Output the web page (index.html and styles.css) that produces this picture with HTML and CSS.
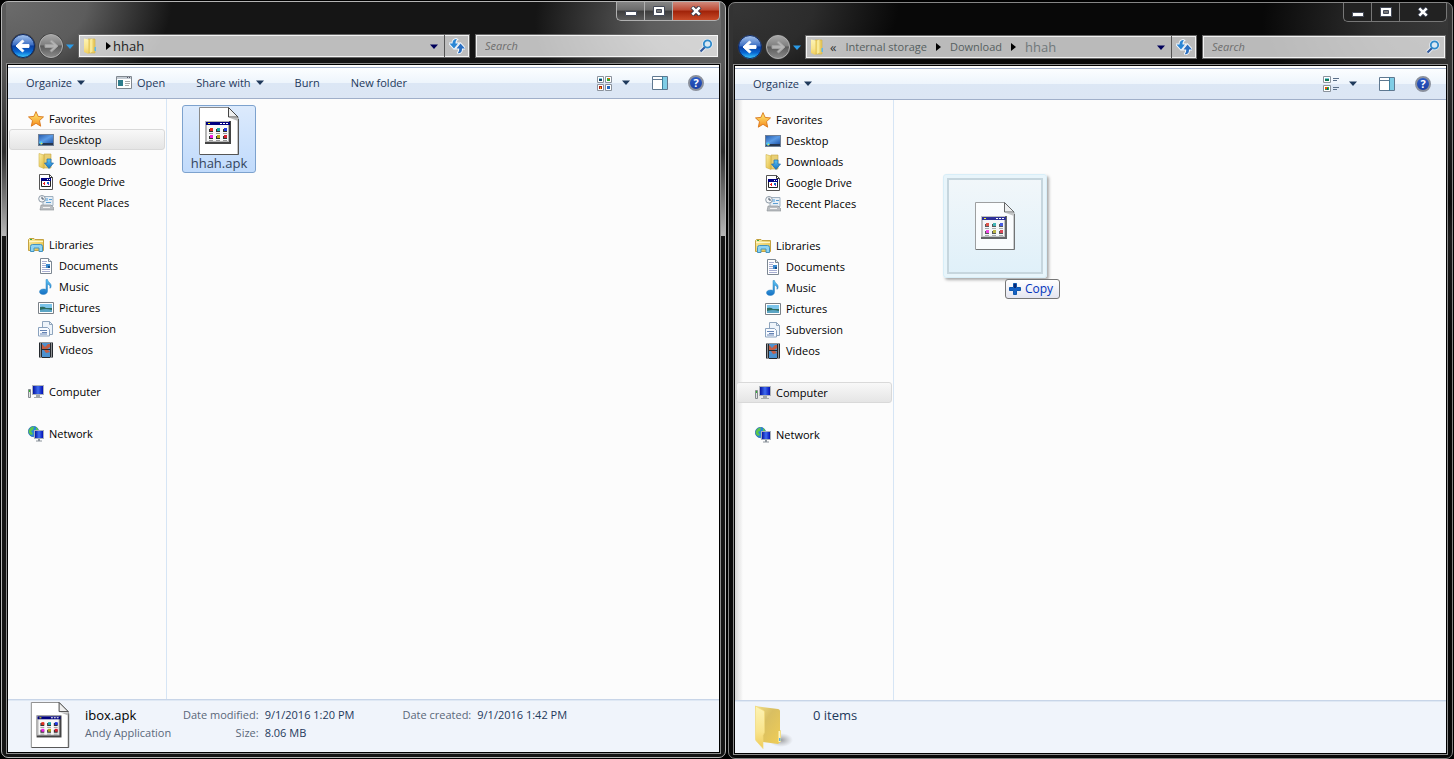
FILE: index.html
```html
<!DOCTYPE html>
<html lang="en">
<head>
    <meta charset="UTF-8">
    <meta name="viewport" content="width=device-width, initial-scale=1.0">
    <title>hhah</title>
    <link rel="stylesheet" href="styles.css">
</head>
<body>

<!-- Shared icons -->
<svg class="sprite" aria-hidden="true">
    <defs>
        <linearGradient id="gold" x1="0" y1="0" x2="1" y2="1"><stop offset="0" stop-color="#fbf0a8"/><stop offset="1" stop-color="#e2b93c"/></linearGradient>
        <linearGradient id="goldLight" x1="0" y1="0" x2="0" y2="1"><stop offset="0" stop-color="#fdf3b4"/><stop offset="0.6" stop-color="#f9e48c"/><stop offset="1" stop-color="#efcb58"/></linearGradient>
        <linearGradient id="goldDark" x1="0" y1="0" x2="1" y2="1"><stop offset="0" stop-color="#f3e08a"/><stop offset="0.4" stop-color="#d9bf62"/><stop offset="1" stop-color="#f0cd55"/></linearGradient>
        <linearGradient id="blue" x1="0" y1="0" x2="0" y2="1"><stop offset="0" stop-color="#5cc3f3"/><stop offset="1" stop-color="#1571c4"/></linearGradient>
        <linearGradient id="screen" x1="0" y1="0" x2="1" y2="1"><stop offset="0" stop-color="#2a5fae"/><stop offset="0.5" stop-color="#5b9be6"/><stop offset="1" stop-color="#2359ad"/></linearGradient>
        <linearGradient id="monitor" x1="0" y1="0" x2="1" y2="0"><stop offset="0" stop-color="#0613a0"/><stop offset="0.5" stop-color="#3f6cf0"/><stop offset="1" stop-color="#0310b4"/></linearGradient>
        <linearGradient id="star" x1="0" y1="0" x2="0" y2="1"><stop offset="0" stop-color="#fff27a"/><stop offset="1" stop-color="#f58a1c"/></linearGradient>
        <linearGradient id="ballBlue" x1="0" y1="0" x2="0" y2="1"><stop offset="0" stop-color="#a9c6ee"/><stop offset="0.45" stop-color="#3c6fc4"/><stop offset="0.5" stop-color="#0a3fa0"/><stop offset="0.75" stop-color="#0868d4"/><stop offset="1" stop-color="#3fd0ff"/></linearGradient>
        <linearGradient id="ballGray" x1="0" y1="0" x2="0" y2="1"><stop offset="0" stop-color="#a8a8a8"/><stop offset="0.45" stop-color="#808080"/><stop offset="0.5" stop-color="#5a5a5a"/><stop offset="1" stop-color="#8c8c8c"/></linearGradient>
        <radialGradient id="shade"><stop offset="0" stop-color="#777" stop-opacity="0.7"/><stop offset="1" stop-color="#999" stop-opacity="0"/></radialGradient>
    </defs>
    <symbol id="i-star" viewBox="0 0 16 16"><path d="M8 0.600l2.100 4.800 5.400.5-4 3.700 1.200 5.600L8 12.300l-4.700 2.900 1.200-5.600-4-3.700 5.400-.5z" fill="url(#star)" stroke="#d9761a" stroke-width="0.9" stroke-linejoin="round"/></symbol>
    <symbol id="i-desktop" viewBox="0 0 16 16"><path d="M0 2h16v12H0z" fill="#6f7f96"/><path d="M1 3h14v8H1z" fill="url(#screen)"/><path d="M1 11h14v2H1z" fill="#26364f"/><circle cx="3" cy="11" r="1.800" fill="#4cc8ef"/><circle cx="3.500" cy="11.500" r="0.8" fill="#f5d84a"/></symbol>
    <symbol id="i-downloads" viewBox="0 0 16 16"><path d="M6 1h7v14H6z" fill="#e8cf75" stroke="#c6a641" stroke-width="0.6"/><path d="M1 0.500l5 1.500v13.500L1 13.500z" fill="url(#gold)" stroke="#cfae45" stroke-width="0.6"/><path d="M9 6h4v4h2.500L11 15.500 6.500 10H9z" fill="url(#blue)" stroke="#1a68ad" stroke-width="0.7"/></symbol>
    <symbol id="i-exe" viewBox="0 0 16 16"><path d="M1.500 0.500h10l3 3v12h-13z" fill="#fff" stroke="#555"/><path d="M11.500 0.500v3h3" fill="none" stroke="#333"/><path d="M3.500 4.500h9v8h-9z" fill="#fff" stroke="#222"/><path d="M3 4h10v3H3z" fill="#000080"/><path d="M9 5h1v1H9zM11 5h1v1h-1z" fill="#fff"/><path d="M6 8h1v3H6zM5 9h1v1H5z" fill="#e22"/><path d="M9 8h2v2H9z" fill="#16c"/><path d="M10 10h1v1h-1z" fill="#c0c"/></symbol>
    <symbol id="i-recent" viewBox="0 0 16 16"><path d="M5 1.500h10v9H5z" fill="#e6eef5" stroke="#9fb0bf"/><path d="M7 3h3v3H7z" fill="#9ac7ea"/><path d="M11 4h3v1h-3zM8 7h5v1H8z" fill="#5a9fd4"/><path d="M3 10h10l3 3v2H2z" fill="#b9bdc1" stroke="#8b9095" stroke-width="0.6"/><path d="M5 12h7v1H5z" fill="#f4f4f4"/><circle cx="4" cy="3.800" r="3.300" fill="#f5f7f9" stroke="#8e9aa6"/><path d="M4 1.800v2.200h2" fill="none" stroke="#456"/></symbol>
    <symbol id="i-libraries" viewBox="0 0 16 16"><path d="M0.500 2.500l1-1H6l1 1h8.500v11H0.500z" fill="url(#gold)" stroke="#c4a241"/><path d="M1 4.500h14" stroke="#fff6c8"/><path d="M2 2h2v1H2z" fill="#3aa845"/><path d="M2.500 14.500v-5q0-2 2-2h8q2 0 2 2v5h-3.500v-3.500h-5v3.500z" fill="#8fd3f2" stroke="#4393c0"/></symbol>
    <symbol id="i-documents" viewBox="0 0 16 16"><path d="M2.500 0.500h8l3 3v12h-11z" fill="#fff" stroke="#7c8792"/><path d="M10.500 0.500v3h3" fill="#e4eaf0" stroke="#7c8792"/><path d="M4 3.500h5M4 5.500h4M4 7.500h4M4 9.500h4M4 11.500h8M4 13.500h8" stroke="#a8aed2"/><path d="M8 6h4v4H8z" fill="#3c8ad0"/><path d="M10 8h2v2h-2z" fill="#154f8c"/></symbol>
    <symbol id="i-music" viewBox="0 0 16 16"><path d="M8 0.500h1.500c.4 3 4.500 3.500 3.500 7.500-.3 1-1 1.500-1.200 1.200C12.600 7 11.500 5.800 9.500 5.200V12c0 2-1.700 3.500-4.200 3.500S1.500 14.200 1.500 12.800 3 10 5.500 10c1 0 1.800.1 2.500.5z" fill="url(#blue)" stroke="#2a80c0" stroke-width="0.5"/></symbol>
    <symbol id="i-pictures" viewBox="0 0 16 16"><path d="M0.500 2.500h15v11H0.500z" fill="#fff" stroke="#7a8087"/><path d="M2 4h12v8H2z" fill="#7cc4ea"/><path d="M2 7q4-1 6 1h6v4H2z" fill="#2c6c60"/><path d="M2 10q6-2 12 0v2H2z" fill="#5ba5c4"/></symbol>
    <symbol id="i-subversion" viewBox="0 0 16 16"><path d="M4.500 0.500h7l3 3v10h-10z" fill="#eef4fa" stroke="#8fa5bd"/><path d="M11.500 0.500v3h3" fill="none" stroke="#8fa5bd"/><path d="M0.500 6.500h9l2 2v6.500H0.500z" fill="#f8fbff" stroke="#8aa2be"/><path d="M2 9.500h7M4 11.500h5M2 13h7" stroke="#6684b4"/></symbol>
    <symbol id="i-videos" viewBox="0 0 16 16"><path d="M1 0.500h14v15H1z" fill="#25292e"/><path d="M4 1h8v14H4z" fill="#4c91cf"/><path d="M4 2l3 3 3-3h2v3l-3 2H4zM6 8h4l2 2-4 1z" fill="#c45d43"/><path d="M4 7h8v1H4zM4 15h8v1H4z" fill="#25292e"/><path d="M2.500 1.500v14M13.500 1.500v14" stroke="#fff" stroke-dasharray="1 1"/></symbol>
    <symbol id="i-computer" viewBox="0 0 16 16"><path d="M4 1h12v10H4z" fill="#aeb3b9"/><path d="M5 2h10v8H5z" fill="url(#monitor)"/><path d="M8 11h4v2h2v1H6v-1h2z" fill="#a3a7ab"/><path d="M0.500 5.500h2v8h-2z" fill="#dfe2e4" stroke="#858a8e"/><path d="M1 6h1v2H1z" fill="#35b535"/></symbol>
    <symbol id="i-network" viewBox="0 0 16 16"><circle cx="5.500" cy="5.500" r="5.200" fill="#2888d8" stroke="#1c5fa0" stroke-width="0.6"/><path d="M1 4q2-4 5-3.200L5 4 3 5l2 3-2 1Q0 7 1 4zM8 1q2 1 2 3L8 4z" fill="#5cc84a"/><path d="M6 4h10v9H6z" fill="#a8b0ba"/><path d="M7 5h8v7H7z" fill="url(#monitor)"/><path d="M10 13h2v1.500h2v1H8v-1h2z" fill="#8c939b"/></symbol>
    <symbol id="i-folder" viewBox="0 0 16 18"><path d="M6 2h7v14H6z" fill="#e9cc62" stroke="#d0ae42" stroke-width="0.6"/><path d="M2 1.500l4.500 1V17L2 15z" fill="url(#goldLight)"/><path d="M8 2.500l2.500-1v13l-2.500 1.500z" fill="#f9ea98"/><path d="M12.500 10h1.500v4h-1.500z" fill="#5cb8ee"/></symbol>
    <symbol id="i-folder-lg" viewBox="3 0 40 48"><ellipse cx="29" cy="37" rx="12" ry="7" fill="url(#shade)"/><path d="M3 3l23 3c1 0 2 1 2 2v19l1 1v10l-3 3-15-2z" fill="url(#goldDark)"/><path d="M3.500 3l8 4.500c.6.400 1 1 1 2v20l-1.500 3v13L4.300 38c-.6-.7-.8-1.200-.8-2z" fill="url(#goldLight)" stroke="#f0d878" stroke-width="0.7"/><path d="M26.500 28h2v11h-2z" fill="#fff4bc"/><path d="M27 35h1.500v3H27z" fill="#5ab2e8"/></symbol>
    <symbol id="i-apk" viewBox="0 0 40 48">
        <path d="M0.500 0.500h29l9.500 9.500v37.500H0.500z" fill="#fff" stroke="#8a8a8a"/>
        <path d="M1 47.500h38.500V12" fill="none" stroke="#555"/>
        <path d="M29.500 0.500v9.500H39z" fill="#eee" stroke="#444"/><path d="M31 11h8v3z" fill="#bbb"/>
        <path d="M6 14h26v23H6z" fill="#444"/><path d="M6 14h24v21H6z" fill="#b5b5b5"/><path d="M8 18h21v16H8z" fill="#f8f8f8"/>
        <path d="M7 15h24v3H7z" fill="#000080"/><path d="M9 16h2v1H9z" fill="#ff0"/><path d="M21 16h2v1h-2zM24 16h2v1h-2zM27 16h2v1h-2z" fill="#fff"/>
        <path d="M10 22h4v3h-4zM17 22h4v3h-4zM24 22h4v3h-4zM10 29h4v3h-4zM17 29h4v3h-4zM24 29h4v3h-4z" fill="#333"/>
        <path d="M11 21h3v3h-3z" fill="#e03020"/><path d="M18 21h3v3h-3z" fill="#18a8a8"/><path d="M25 21h3v3h-3z" fill="#2038e0"/>
        <path d="M11 28h3v3h-3z" fill="#f020e0"/><path d="M18 28h3v3h-3z" fill="#b0a818"/><path d="M25 28h3v3h-3z" fill="#d82030"/>
        <path d="M10 26.500h4M17 26.500h4M24 26.500h4M10 33.500h4M17 33.500h4M24 33.500h4" stroke="#999"/>
    </symbol>
    <symbol id="i-back" viewBox="0 0 26 26"><circle cx="13" cy="13" r="12.500" fill="#3a3a3a"/><circle cx="13" cy="13" r="11.500" fill="url(#ballBlue)" stroke="#0d2864"/><path d="M6 13l6.500-6 1.400 1.500-3.200 3.100H19v2.800h-8.300l3.200 3.100-1.400 1.500z" fill="#fff" stroke="#fff" stroke-linejoin="round"/></symbol>
    <symbol id="i-forward" viewBox="0 0 26 26"><circle cx="13" cy="13" r="12.500" fill="#3a3a3a"/><circle cx="13" cy="13" r="11.500" fill="url(#ballGray)" stroke="#b0b0b0"/><path d="M20 13l-6.500-6-1.400 1.500 3.200 3.100H7v2.800h8.300l-3.200 3.100 1.400 1.500z" fill="#b4b4b4" stroke="#a0a0a0" stroke-linejoin="round"/></symbol>
    <symbol id="i-refresh" viewBox="0 0 16 16"><path d="M7 1C4.500 1.500 3.500 3 3.500 5.500H0.500L5 10.500l4-5H6.500c0-2 .3-3 1.500-4z" fill="#2b86d4" stroke="#f2f7fc" stroke-width="2" paint-order="stroke"/><path d="M9.500 15.500c3-.8 3.500-2.500 3.500-5h3L11.500 5.500 7.500 10.500h2.700c0 2-.2 3-1.200 4z" fill="#2b6fc0" stroke="#f2f7fc" stroke-width="2" paint-order="stroke"/></symbol>
    <symbol id="i-search" viewBox="0 0 14 14"><circle cx="8.500" cy="5" r="3.700" fill="#d8e8f4" stroke="#e8eef4" stroke-width="3.200"/><path d="M6 8L1.500 12.500" stroke="#e8eef4" stroke-width="4"/><path d="M6 8L1.500 12.500" stroke="#31589c" stroke-width="2.200"/><circle cx="8.500" cy="5" r="3.700" fill="#d8e8f4" stroke="#2f8acb" stroke-width="1.800"/></symbol>
    <symbol id="i-down" viewBox="0 0 8 5"><path d="M0 0.500h8L4 5z" fill="currentColor"/></symbol>
    <symbol id="i-right" viewBox="0 0 5 8"><path d="M0 0l5 4-5 4z" fill="currentColor"/></symbol>
    <symbol id="i-open" viewBox="0 0 16 14"><path d="M0.500 0.500h15v12H0.500z" fill="#fff" stroke="#808890"/><path d="M1 1h14v2H1z" fill="#c4ccd4"/><path d="M11 1h1v1h-1zM13 1h1v1h-1z" fill="#556"/><path d="M2 4h5v6H2z" fill="#2f7d8c"/><path d="M9 5.500h5M9 7.500h5M9 9.500h4" stroke="#aaa"/></symbol>
    <symbol id="i-views" viewBox="0 0 16 16"><path d="M1.500 1.500h6v6h-6zM9.500 1.500h6v6h-6zM1.500 9.500h6v6h-6zM9.500 9.500h6v6h-6z" fill="#fff" stroke="#8a929c"/><path d="M3 3h3v1H3z" fill="#7cd"/><path d="M3 4h3v2H3z" fill="#146"/><path d="M11 3h3v3h-3z" fill="#3a3"/><path d="M12 3h2v1h-2z" fill="#e60"/><path d="M3 11h3v3H3z" fill="#a21"/><path d="M4 12h1v2H4z" fill="#fa0"/><path d="M11 11h3v3h-3z" fill="#26b"/></symbol>
    <symbol id="i-tiles" viewBox="0 0 16 16"><path d="M0.500 0.500h7v6h-7zM0.500 9.500h7v6h-7z" fill="#fff" stroke="#8a929c"/><path d="M2 2h4v1H2z" fill="#7cd"/><path d="M2 3h4v2H2z" fill="#175"/><path d="M2 11h4v3H2z" fill="#3a3"/><path d="M2 11h2v2H2z" fill="#e50"/><path d="M4 12h1v2H4z" fill="#13a"/><path d="M10 2.500h6M10 4.500h4M10 11.500h6M10 13.500h4" stroke="#5a6f88"/></symbol>
    <symbol id="i-preview" viewBox="0 0 16 14"><path d="M0.500 0.500h15v13H0.500z" fill="#fff" stroke="#5f7890"/><path d="M1 3.500h9" stroke="#5f7890"/><path d="M10 1h5v12h-5z" fill="#7fcde6"/><path d="M10.500 0v14" stroke="#3f7f9c"/></symbol>
    <symbol id="i-close" viewBox="0 0 12 10"><path d="M2 1l8 8M10 1L2 9" stroke="#333a4a" stroke-width="4.400"/><path d="M2.300 1.300l7.400 7.400M9.700 1.300L2.300 8.700" stroke="#fff" stroke-width="2.600"/></symbol>
    <symbol id="i-min" viewBox="0 0 12 10"><path d="M0.500 5.500h11v4H0.500z" fill="#fff" stroke="#444a58"/></symbol>
    <symbol id="i-max" viewBox="0 0 12 10"><path d="M0.500 0.500h11v9H0.500z" fill="#fff" stroke="#444a58"/><path d="M3.500 3.500h5v3h-5z" fill="#777" stroke="#444a58"/></symbol>
    <symbol id="i-plus" viewBox="0 0 12 12"><path d="M4.500 0.500h3v4h4v3h-4v4h-3v-4h-4v-3h4z" fill="#1560c4" stroke="#0f56ac"/><path d="M5 1h2v4H5z" fill="#0a2878"/></symbol>
</svg>

<main class="desktop">

    <section class="window" aria-label="hhah on this computer">
        <header class="glass">
            <div class="caption">
                <button class="caption-btn" aria-label="Minimize"><svg class="glyph"><use href="#i-min"/></svg></button>
                <button class="caption-btn" aria-label="Maximize"><svg class="glyph"><use href="#i-max"/></svg></button>
                <button class="caption-btn close" aria-label="Close"><svg class="glyph"><use href="#i-close"/></svg></button>
            </div>
            <div class="navbar">
                <div class="travel">
                    <button aria-label="Back"><svg class="ball"><use href="#i-back"/></svg></button>
                    <button aria-label="Forward"><svg class="ball"><use href="#i-forward"/></svg></button>
                    <button class="recent" aria-label="Recent pages"><svg class="down"><use href="#i-down"/></svg></button>
                </div>
                <div class="address">
                    <svg class="folder"><use href="#i-folder"/></svg>
                    <nav class="crumbs" aria-label="Path">
                        <svg class="right"><use href="#i-right"/></svg>
                        <a class="current" href="#">hhah</a>
                    </nav>
                    <button class="history" aria-label="Previous locations"><svg class="down"><use href="#i-down"/></svg></button>
                    <button class="refresh" aria-label="Refresh"><svg class="icon"><use href="#i-refresh"/></svg></button>
                </div>
                <div class="search">
                    <input type="text" placeholder="Search" aria-label="Search hhah">
                    <svg class="lens"><use href="#i-search"/></svg>
                </div>
            </div>
        </header>

        <div class="client">
            <div class="toolbar">
                <button>Organize <svg class="down"><use href="#i-down"/></svg></button>
                <button><svg class="wide"><use href="#i-open"/></svg>Open</button>
                <button>Share with <svg class="down"><use href="#i-down"/></svg></button>
                <button>Burn</button>
                <button>New folder</button>
                <div class="tools">
                    <button aria-label="Change view"><svg class="icon"><use href="#i-views"/></svg></button>
                    <button class="view-menu" aria-label="More views"><svg class="down"><use href="#i-down"/></svg></button>
                    <button aria-label="Preview pane"><svg class="wide"><use href="#i-preview"/></svg></button>
                    <button class="help" aria-label="Help">?</button>
                </div>
            </div>
            <div class="panes">
                <nav class="tree" aria-label="Folders">
                    <ul>
                        <li><a href="#"><svg class="icon"><use href="#i-star"/></svg>Favorites</a></li>
                        <li><a class="sub selected" href="#"><svg class="icon"><use href="#i-desktop"/></svg>Desktop</a></li>
                        <li><a class="sub" href="#"><svg class="icon"><use href="#i-downloads"/></svg>Downloads</a></li>
                        <li><a class="sub" href="#"><svg class="icon"><use href="#i-exe"/></svg>Google Drive</a></li>
                        <li><a class="sub" href="#"><svg class="icon"><use href="#i-recent"/></svg>Recent Places</a></li>
                    </ul>
                    <ul>
                        <li><a href="#"><svg class="icon"><use href="#i-libraries"/></svg>Libraries</a></li>
                        <li><a class="sub" href="#"><svg class="icon"><use href="#i-documents"/></svg>Documents</a></li>
                        <li><a class="sub" href="#"><svg class="icon"><use href="#i-music"/></svg>Music</a></li>
                        <li><a class="sub" href="#"><svg class="icon"><use href="#i-pictures"/></svg>Pictures</a></li>
                        <li><a class="sub" href="#"><svg class="icon"><use href="#i-subversion"/></svg>Subversion</a></li>
                        <li><a class="sub" href="#"><svg class="icon"><use href="#i-videos"/></svg>Videos</a></li>
                    </ul>
                    <ul>
                        <li><a href="#"><svg class="icon"><use href="#i-computer"/></svg>Computer</a></li>
                    </ul>
                    <ul>
                        <li><a href="#"><svg class="icon"><use href="#i-network"/></svg>Network</a></li>
                    </ul>
                </nav>
                <div class="files">
                    <button class="file"><svg class="apk"><use href="#i-apk"/></svg>hhah.apk</button>
                </div>
            </div>
            <footer class="details">
                <svg class="apk"><use href="#i-apk"/></svg>
                <div class="summary">
                    <div class="name">ibox.apk</div>
                    <div class="type">Andy Application</div>
                </div>
                <dl class="props">
                    <dt>Date modified:</dt><dd>9/1/2016 1:20 PM</dd>
                    <dt>Size:</dt><dd>8.06 MB</dd>
                </dl>
                <dl class="props">
                    <dt>Date created:</dt><dd>9/1/2016 1:42 PM</dd>
                </dl>
            </footer>
        </div>
    </section>

    <section class="window inactive" aria-label="hhah on internal storage">
        <header class="glass">
            <div class="caption">
                <button class="caption-btn" aria-label="Minimize"><svg class="glyph"><use href="#i-min"/></svg></button>
                <button class="caption-btn" aria-label="Maximize"><svg class="glyph"><use href="#i-max"/></svg></button>
                <button class="caption-btn close" aria-label="Close"><svg class="glyph"><use href="#i-close"/></svg></button>
            </div>
            <div class="navbar">
                <div class="travel">
                    <button aria-label="Back"><svg class="ball"><use href="#i-back"/></svg></button>
                    <button aria-label="Forward"><svg class="ball"><use href="#i-forward"/></svg></button>
                    <button class="recent" aria-label="Recent pages"><svg class="down"><use href="#i-down"/></svg></button>
                </div>
                <div class="address">
                    <svg class="folder"><use href="#i-folder"/></svg>
                    <nav class="crumbs path" aria-label="Path">
                        <span class="more">«</span>
                        <a href="#">Internal storage</a>
                        <svg class="right"><use href="#i-right"/></svg>
                        <a href="#">Download</a>
                        <svg class="right"><use href="#i-right"/></svg>
                        <a class="current" href="#">hhah</a>
                    </nav>
                    <button class="history" aria-label="Previous locations"><svg class="down"><use href="#i-down"/></svg></button>
                    <button class="refresh" aria-label="Refresh"><svg class="icon"><use href="#i-refresh"/></svg></button>
                </div>
                <div class="search">
                    <input type="text" placeholder="Search" aria-label="Search hhah">
                    <svg class="lens"><use href="#i-search"/></svg>
                </div>
            </div>
        </header>

        <div class="client">
            <div class="toolbar">
                <button>Organize <svg class="down"><use href="#i-down"/></svg></button>
                <div class="tools">
                    <button aria-label="Change view"><svg class="icon"><use href="#i-tiles"/></svg></button>
                    <button class="view-menu" aria-label="More views"><svg class="down"><use href="#i-down"/></svg></button>
                    <button aria-label="Preview pane"><svg class="wide"><use href="#i-preview"/></svg></button>
                    <button class="help" aria-label="Help">?</button>
                </div>
            </div>
            <div class="panes">
                <nav class="tree" aria-label="Folders">
                    <ul>
                        <li><a href="#"><svg class="icon"><use href="#i-star"/></svg>Favorites</a></li>
                        <li><a class="sub" href="#"><svg class="icon"><use href="#i-desktop"/></svg>Desktop</a></li>
                        <li><a class="sub" href="#"><svg class="icon"><use href="#i-downloads"/></svg>Downloads</a></li>
                        <li><a class="sub" href="#"><svg class="icon"><use href="#i-exe"/></svg>Google Drive</a></li>
                        <li><a class="sub" href="#"><svg class="icon"><use href="#i-recent"/></svg>Recent Places</a></li>
                    </ul>
                    <ul>
                        <li><a href="#"><svg class="icon"><use href="#i-libraries"/></svg>Libraries</a></li>
                        <li><a class="sub" href="#"><svg class="icon"><use href="#i-documents"/></svg>Documents</a></li>
                        <li><a class="sub" href="#"><svg class="icon"><use href="#i-music"/></svg>Music</a></li>
                        <li><a class="sub" href="#"><svg class="icon"><use href="#i-pictures"/></svg>Pictures</a></li>
                        <li><a class="sub" href="#"><svg class="icon"><use href="#i-subversion"/></svg>Subversion</a></li>
                        <li><a class="sub" href="#"><svg class="icon"><use href="#i-videos"/></svg>Videos</a></li>
                    </ul>
                    <ul>
                        <li><a class="selected" href="#"><svg class="icon"><use href="#i-computer"/></svg>Computer</a></li>
                    </ul>
                    <ul>
                        <li><a href="#"><svg class="icon"><use href="#i-network"/></svg>Network</a></li>
                    </ul>
                </nav>
                <div class="files">
                    <div class="drag">
                        <svg class="apk"><use href="#i-apk"/></svg>
                        <div class="drop-tip"><svg class="plus"><use href="#i-plus"/></svg>Copy</div>
                    </div>
                </div>
            </div>
            <footer class="details">
                <svg class="folder-lg"><use href="#i-folder-lg"/></svg>
                <div class="count">0 items</div>
            </footer>
        </div>
    </section>

</main>

</body>
</html>
```
FILE: styles.css
```css
* {
    box-sizing: border-box;
}

body {
    margin: 0;
    background: #000;
    color: #000;
    font-family: "Open Sans", "Noto Sans", sans-serif;
    font-size: 11px;
    line-height: 18px;
}

button {
    display: flex;
    align-items: center;
    padding: 0;
    border: none;
    background: none;
    color: inherit;
    font: inherit;
}

a {
    color: inherit;
    text-decoration: none;
}

svg {
    display: block;
    flex: none;
}

.sprite {
    position: absolute;
    width: 0;
    height: 0;
}

.icon { width: 16px; height: 16px; }
.wide { width: 16px; height: 14px; }
.down { width: 8px; height: 5px; }
.right { width: 5px; height: 8px; }
.glyph { width: 12px; height: 10px; }
.ball { width: 26px; height: 26px; }
.folder { width: 16px; height: 18px; }
.lens { width: 14px; height: 14px; }
.plus { width: 12px; height: 12px; }
.apk, .folder-lg { width: 40px; height: 48px; }

/* Windows */
.desktop {
    display: flex;
    gap: 2px;
    min-height: 100vh;
    padding: 1px 1px 0;
}

.window {
    flex: 1;
    min-width: 0;
    display: flex;
    flex-direction: column;
    margin-bottom: 1px;
    padding: 0 4px 3px;
    border: 1px solid #b4b4b4;
    border-radius: 7px;
    background:
        linear-gradient(#5a5a5a 60px, #2c2c2c 150px, #b8b8b8 234px) left top / 4px 234px no-repeat,
        linear-gradient(#5a5a5a 60px, #2c2c2c 150px, #b8b8b8 234px) right top / 4px 234px no-repeat,
        radial-gradient(170px 110px at 0 0, #6c6c6c, #5c5c5c 50%, rgba(21, 21, 21, 0)) no-repeat,
        radial-gradient(190px 110px at 100% 20px, #6c6c6c, #5c5c5c 40%, rgba(21, 21, 21, 0)) no-repeat,
        #151515;
}

.window.inactive {
    margin: 1px 0 0;
    border-color: #858585;
    background:
        linear-gradient(#333 60px, #0a0a0a 200px, #1c1c1c 234px, #080808 340px) left top / 4px 340px no-repeat,
        linear-gradient(#333 60px, #0a0a0a 200px, #1c1c1c 234px, #080808 340px) right top / 4px 340px no-repeat,
        radial-gradient(170px 110px at 0 0, #363636, #2c2c2c 50%, rgba(8, 8, 8, 0)) no-repeat,
        radial-gradient(190px 110px at 100% 20px, #383838, #2e2e2e 40%, rgba(8, 8, 8, 0)) no-repeat,
        #080808;
}

.glass {
    height: 61px;
}

.caption {
    display: flex;
    justify-content: flex-end;
    height: 19px;
    padding-right: 1px;
}

.caption-btn {
    justify-content: center;
    width: 28px;
    border: 1px solid #b0b0b0;
    border-top: none;
    border-right: none;
    background: linear-gradient(#858585, #6a6a6a 45%, #3c3c3c 50%, #5c5c5c);
}

.caption-btn:first-child {
    border-bottom-left-radius: 5px;
}

.caption-btn.close {
    width: 48px;
    border-right: 1px solid #b0b0b0;
    border-bottom-right-radius: 5px;
    background: linear-gradient(#d08a7c, #bd4a34 45%, #a02208 50%, #c84a28);
}

.inactive .caption-btn,
.inactive .caption-btn.close {
    border-color: #777;
    background: #222;
}

.navbar {
    display: flex;
    align-items: center;
    height: 26px;
    margin-top: 12px;
    padding: 0 2px 0 4px;
}

.travel {
    display: flex;
    align-items: center;
    gap: 2px;
    width: 68px;
}

.recent {
    color: #2a9be8;
}

.address,
.search {
    display: flex;
    align-items: center;
    height: 24px;
    border: 1px solid #666;
    background: rgba(255, 255, 255, 0.72);
    box-shadow: inset 0 0 0 1px rgba(255, 255, 255, 0.8);
}

.address {
    flex: 1;
    min-width: 0;
    padding-left: 3px;
}

.crumbs {
    flex: 1;
    display: flex;
    align-items: center;
    gap: 2px;
    padding-left: 8px;
    color: #222;
    white-space: nowrap;
}

.crumbs.path {
    gap: 9px;
    padding-left: 5px;
    color: #566060;
}

.crumbs .right {
    color: #000;
}

.crumbs .current {
    font-size: 13px;
}

.path .current {
    color: #70787a;
}

.more {
    font-size: 13px;
    color: #333;
}

.history {
    width: 14px;
    height: 22px;
    color: #00005a;
}

.refresh {
    justify-content: center;
    width: 25px;
    height: 22px;
    border-left: 1px solid #555;
}

.search {
    width: 244px;
    margin-left: 5px;
    padding: 0 5px 0 9px;
}

.search input {
    flex: 1;
    min-width: 0;
    padding: 0;
    border: none;
    outline: none;
    background: none;
    font: inherit;
    font-style: italic;
}

.search input::placeholder {
    color: #6e6e6e;
}

.client {
    flex: 1;
    display: flex;
    flex-direction: column;
    border: 1px solid #8c8c8c;
    outline: 1px solid #000;
    outline-offset: -2px;
    padding: 1px;
    background: #fcfcfc;
}

/* Command bar */
.toolbar {
    display: flex;
    align-items: center;
    gap: 31px;
    height: 34px;
    padding: 0 15px 0 18px;
    border-top: 2px solid #fff;
    border-bottom: 1px solid #a0afc9;
    background: linear-gradient(#a3b2cc 1px, #fcfeff 1px, #eef5fc 50%, #dce7f5 51%, #dce6f4);
    color: #1e395b;
}

.toolbar button {
    gap: 5px;
}

.tools {
    display: flex;
    align-items: center;
    gap: 20px;
    margin-left: auto;
}

.tools .view-menu {
    margin: 0 2px 0 -10px;
}

.toolbar .help {
    justify-content: center;
    width: 16px;
    height: 16px;
    border: 2px solid #8a909c;
    border-radius: 50%;
    background: linear-gradient(#2c5cc8, #1a3fa4);
    color: #fff;
    font-weight: bold;
    line-height: 12px;
}

/* Panes */
.panes {
    flex: 1;
    display: flex;
}

.tree {
    width: 159px;
    padding: 9px 1px 0;
    border-right: 1px solid #d6e5f5;
}

.inactive .tree {
    background: linear-gradient(90deg, #d4d4d4, #fcfcfc 8px);
}

.tree ul {
    margin: 0 0 21px;
    padding: 0;
    list-style: none;
}

.tree a {
    display: flex;
    align-items: center;
    gap: 5px;
    height: 21px;
    padding-left: 18px;
    border: 1px solid transparent;
    border-radius: 3px;
}

.tree .sub {
    padding-left: 28px;
}

.tree .selected {
    border-color: #d9d9d9;
    background: linear-gradient(#f8f8f8, #e5e5e5);
}

.files {
    position: relative;
    flex: 1;
    padding: 6px 15px;
}

.file {
    flex-direction: column;
    width: 74px;
    height: 68px;
    padding-top: 1px;
    border: 1px solid #7da2ce;
    border-radius: 3px;
    background: linear-gradient(#dceafc, #c1dbfc);
    color: #33445c;
    font-size: 13px;
    line-height: 16px;
}

/* Item being dragged */
.drag {
    position: absolute;
    top: 74px;
    left: 49px;
    display: flex;
    align-items: center;
    justify-content: center;
    width: 104px;
    height: 104px;
    border: 1px solid #d8eef8;
    border-radius: 3px;
    outline: 2px solid #c6d6de;
    outline-offset: -6px;
    background: linear-gradient(#f2f7fa, #dff0f9);
    box-shadow: inset 0 0 0 3px #e8f5fb, 2px 2px 3px #aaa;
}

.drag .apk {
    opacity: 0.8;
}

.drop-tip {
    position: absolute;
    top: 104px;
    left: 61px;
    display: flex;
    align-items: center;
    gap: 4px;
    width: 55px;
    height: 20px;
    padding-left: 3px;
    border: 1px solid #767676;
    border-radius: 3px;
    background: linear-gradient(#fff, #e4e5f0);
    color: #0033bb;
    font-size: 12px;
}

/* Details pane */
.details {
    display: flex;
    height: 53px;
    padding: 2px 20px;
    border-top: 1px solid #c8d5e8;
    background: #f0f4fb;
    box-shadow: inset 0 1px 0 #dfe8f4;
    color: #1e395b;
}

.details .apk {
    height: 46px;
    margin-left: 2px;
}

.summary {
    width: 98px;
    margin-left: 15px;
    padding-top: 4px;
    white-space: nowrap;
}

.name {
    color: #000;
    font-size: 13px;
}

.type,
.props dt {
    color: #5a6779;
}

.props {
    display: grid;
    grid-template-columns: auto auto;
    align-content: start;
    column-gap: 6px;
    margin: 0 48px 0 0;
    padding-top: 4px;
}

.props dt {
    text-align: right;
}

.props dd {
    margin: 0;
}

.count {
    margin-left: 18px;
    padding-top: 3px;
    font-size: 13px;
}
```
